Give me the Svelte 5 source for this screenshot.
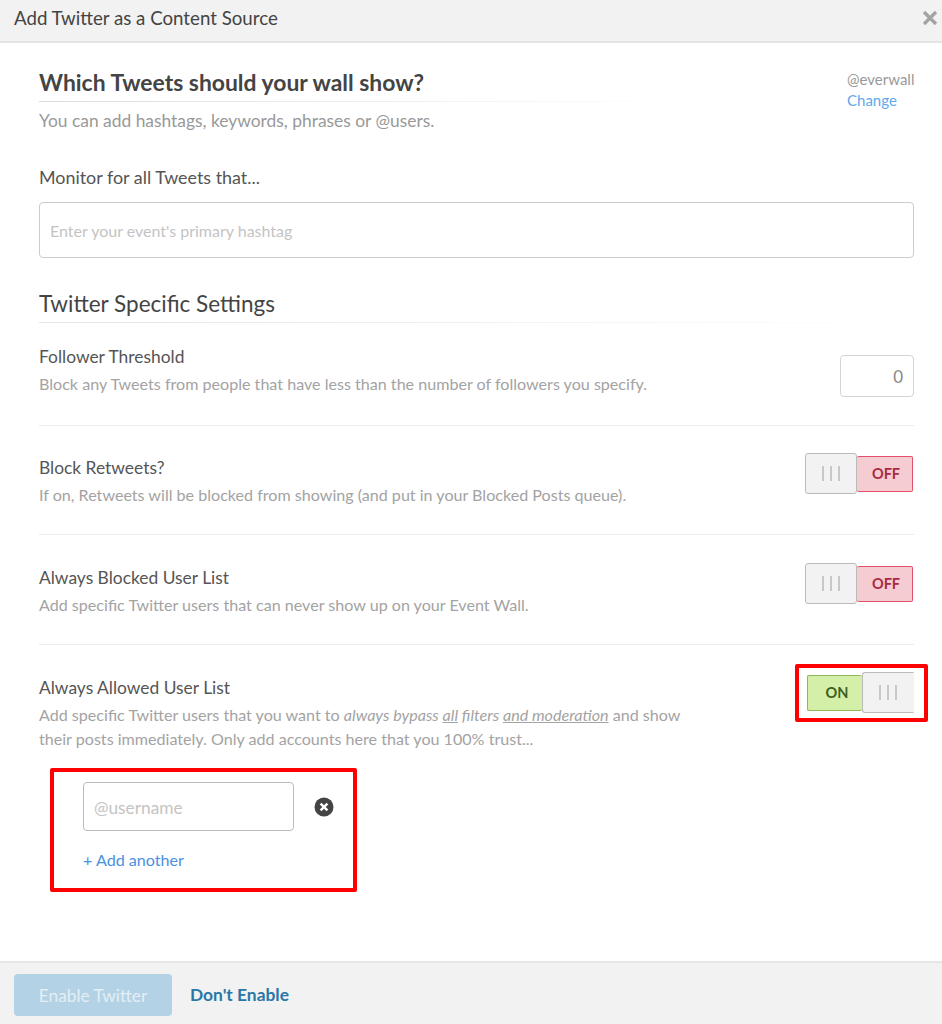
<script>
  const rows = [
    { title: 'Block Retweets?', desc: 'If on, Retweets will be blocked from showing (and put in your Blocked Posts queue).' },
    { title: 'Always Blocked User List', desc: 'Add specific Twitter users that can never show up on your Event Wall.' }
  ];
</script>

<div class="modal">
  <header class="head">
    <span class="head-title">Add Twitter as a Content Source</span>
    <svg class="close" width="16" height="16" viewBox="0 0 16 16"><path d="M2 2 L14 14 M14 2 L2 14" stroke="#a3a3a3" stroke-width="3.2" fill="none"/></svg>
  </header>

  <main class="body">
    <div class="intro">
      <div class="intro-main">
        <h2 class="h-main">Which Tweets should your wall show?</h2>
        <p class="sub">You can add hashtags, keywords, phrases or @users.</p>
      </div>
      <div class="account">
        <div class="handle">@everwall</div>
        <div class="change">Change</div>
      </div>
    </div>

    <label class="monitor">Monitor for all Tweets that...</label>
    <div class="field big">Enter your event's primary hashtag</div>

    <h2 class="h-settings">Twitter Specific Settings</h2>

    <section class="row first">
      <div>
        <div class="r-title">Follower Threshold</div>
        <div class="r-desc">Block any Tweets from people that have less than the number of followers you specify.</div>
      </div>
      <div class="num">0</div>
    </section>

    {#each rows as r}
      <section class="row">
        <div>
          <div class="r-title">{r.title}</div>
          <div class="r-desc">{r.desc}</div>
        </div>
        <div class="toggle off">
          <div class="knob"><i></i><i></i><i></i></div>
          <div class="state">OFF</div>
        </div>
      </section>
    {/each}

    <section class="row last">
      <div class="long">
        <div class="r-title">Always Allowed User List</div>
        <div class="r-desc">Add specific Twitter users that you want to <em>always bypass <u>all</u> filters <u>and moderation</u></em> and show their posts immediately. Only add accounts here that you 100% trust...</div>
      </div>
      <div class="toggle on">
        <div class="state">ON</div>
        <div class="knob"><i></i><i></i><i></i></div>
      </div>
    </section>

    <div class="users">
      <div class="user-line">
        <div class="field user">@username</div>
        <svg width="20" height="20" viewBox="0 0 20 20"><circle cx="10" cy="10" r="9.5" fill="#444"/><path d="M6.6 6.6 L13.4 13.4 M13.4 6.6 L6.6 13.4" stroke="#fff" stroke-width="2.4"/></svg>
      </div>
      <div class="add">+ Add another</div>
    </div>
  </main>

  <footer class="foot">
    <button class="enable">Enable Twitter</button>
    <span class="dont">Don't Enable</span>
  </footer>

  <div class="mark mark-toggle"></div>
  <div class="mark mark-user"></div>
</div>

<style>
  :global(body) { margin: 0; background: #fff; }
  .modal {
    position: relative;
    width: 942px;
    height: 1024px;
    display: flex;
    flex-direction: column;
    overflow: hidden;
    font-family: Lato, "Open Sans", sans-serif;
    color: #555;
  }
  .head {
    flex: none;
    height: 41px;
    background: #f2f2f2;
    border-bottom: 2px solid #e4e4e4;
    display: flex;
    align-items: center;
    justify-content: space-between;
    padding: 0 4px 0 14px;
  }
  .head-title { font-size: 18.7px; color: #444; position: relative; top: -3px; }
  .close { position: relative; top: -3px; }
  .body { flex: 1; padding: 0 28px 0 39px; }
  .intro { display: flex; justify-content: space-between; padding-top: 25px; }
  .intro-main { width: 640px; }
  .h-main {
    margin: 0;
    font-size: 22.9px;
    font-weight: 700;
    line-height: 28px;
    padding-bottom: 5px;
    color: #444;
    border-bottom: 1px solid;
    border-image: linear-gradient(to right, #ddd, #fff) 1;
    white-space: nowrap;
  }
  .sub { margin: 8px 0 0; font-size: 17.4px; line-height: 22px; color: #999; }
  .account { width: 67px; font-size: 15px; line-height: 22px; }
  .handle { color: #999; }
  .change { color: #62a8ea; font-size: 15px; line-height: 20px; }
  .monitor { display: block; margin-top: 33px; font-size: 17.9px; line-height: 24px; color: #555; }
  .field {
    box-sizing: border-box;
    border: 1px solid #ccc;
    border-radius: 4px;
    color: #c4c4c4;
    display: flex;
    align-items: center;
  }
  .big { margin-top: 13px; height: 56px; padding-left: 10px; font-size: 16px; }
  .h-settings {
    margin: 31px 0 0;
    font-size: 22.5px;
    font-weight: 400;
    line-height: 30px;
    padding-bottom: 3px;
    color: #444;
    border-bottom: 1px solid;
    border-image: linear-gradient(to right, #e4e4e4, #fff) 1;
    width: 860px;
  }
  .row {
    display: flex;
    justify-content: space-between;
    align-items: flex-start;
    box-sizing: border-box;
    height: 110px;
    padding-top: 31px;
    border-bottom: 1px solid #ececec;
  }
  .row.first { height: 103px; padding-top: 23px; }
  .row.first + .row { height: 109px; }
  .row.first + .row + .row { padding-top: 32px; }
  .row.last { height: auto; border: 0; padding-top: 32px; }
  .r-title { font-size: 17.4px; line-height: 22px; color: #555; }
  .r-desc { font-size: 16.1px; line-height: 24px; color: #a3a3a3; margin-top: 4px; }
  .long { width: 660px; }
  .num {
    box-sizing: border-box;
    width: 74px;
    height: 42px;
    margin-top: 9px;
    border: 1px solid #d4d4d4;
    border-radius: 4px;
    font-size: 17px;
    color: #888;
    display: flex;
    align-items: center;
    justify-content: flex-end;
    padding-right: 10px;
  }
  .toggle { display: flex; align-items: center; height: 41px; }
  .toggle.off { width: 108px; margin-top: -4px; margin-right: 1px; }
  .toggle.on { width: 107px; position: relative; top: -5px; }
  .knob {
    box-sizing: border-box;
    height: 41px;
    width: 52px;
    background: #f2f2f2;
    border: 1px solid #bbb;
    border-radius: 3px;
    display: flex;
    align-items: center;
    justify-content: center;
    gap: 6px;
    position: relative;
    z-index: 1;
    flex: none;
  }
  .knob i { display: block; width: 2px; height: 15px; background: #c8c8c8; }
  .state {
    box-sizing: border-box;
    height: 36px;
    flex: 1;
    font-size: 14.5px;
    font-weight: 700;
    display: flex;
    align-items: center;
    justify-content: center;
    border-radius: 2px;
  }
  .off .state {
    background: #f6ccd3;
    border: 1px solid #e3506a;
    border-left: 0;
    color: #a62b44;
    padding-left: 3px;
  }
  .on .state {
    background: #d4f0a8;
    border: 1px solid #8fb85a;
    border-right: 0;
    color: #3f5f22;
    padding-left: 4px;
  }
  .on .knob { border-right-color: transparent; border-radius: 3px 0 0 3px; }
  .users { padding-left: 44px; margin-top: 31px; }
  .user-line { display: flex; align-items: center; gap: 20px; }
  .user {
    width: 211px;
    height: 49px;
    border-color: #bbb;
    padding: 2px 0 0 10px;
    font-size: 17.3px;
  }
  .add { margin-top: 19px; font-size: 16.1px; line-height: 20px; color: #4a90e2; }
  .foot {
    flex: none;
    height: 58px;
    padding-top: 3px;
    background: #f2f2f2;
    border-top: 2px solid #e6e6e6;
    display: flex;
    align-items: center;
    gap: 18px;
    padding-left: 14px;
  }
  .enable {
    width: 158px;
    height: 42px;
    border: 0;
    border-radius: 4px;
    background: #b3d2e5;
    color: #e3eef5;
    font-family: inherit;
    font-size: 17.3px;
    padding: 0;
  }
  .dont { font-size: 17.4px; font-weight: 700; color: #2a77a6; margin-top: -2px; }
  .mark { position: absolute; box-sizing: border-box; border: 4px solid #f00; border-radius: 2px; pointer-events: none; }
  .mark-toggle { left: 795px; top: 664px; width: 133px; height: 58px; }
  .mark-user { left: 50px; top: 768px; width: 307px; height: 124px; }
</style>
